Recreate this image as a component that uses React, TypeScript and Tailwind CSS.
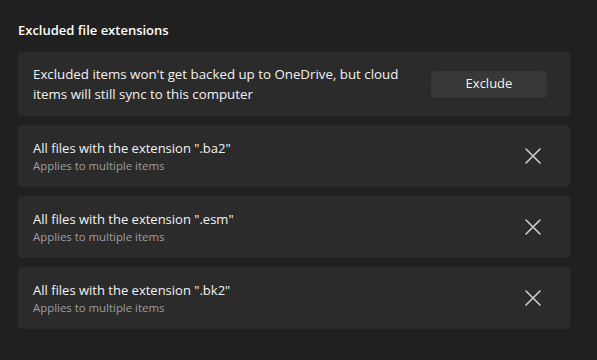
const extensions = ['.ba2', '.esm', '.bk2'];

const CloseIcon = () => (
  <svg width="16" height="16" viewBox="0 0 16 16" className="text-[#cdcdcd]">
    <path d="M1 1 L15 15 M15 1 L1 15" stroke="currentColor" strokeWidth="1.6" strokeLinecap="round" fill="none" />
  </svg>
);

const App = () => {
  return (
    <div className="w-[597px] h-[360px] bg-[#202020] text-white font-['Open_Sans',sans-serif] px-[18px] pt-[20px]">
      <h2 className="text-[13px] font-semibold leading-[20px] mb-[12px]">Excluded file extensions</h2>

      <div className="flex flex-col gap-[9px] w-[552px]">
        {/* Info card */}
        <div className="h-[64px] bg-[#2b2b2b] rounded-[4px] flex items-center justify-between pl-[15px] pr-[23px]">
          <p className="text-[13.3px] leading-[20px] text-[#f2f2f2]">
            Excluded items won't get backed up to OneDrive, but cloud
            <br />
            items will still sync to this computer
          </p>
          <button className="w-[116px] h-[27px] bg-[#373737] rounded-[4px] text-[13px] text-[#f2f2f2]">
            Exclude
          </button>
        </div>

        {extensions.map((ext) => (
          <div
            key={ext}
            className="h-[62px] bg-[#2b2b2b] rounded-[4px] flex items-center justify-between pl-[15px] pr-[29px]"
          >
            <div className="flex flex-col pt-[1px]">
              <span className="text-[13px] leading-[19px] text-[#f2f2f2]">All files with the extension "{ext}"</span>
              <span className="text-[11.4px] leading-[16px] text-[#9e9e9e]">Applies to multiple items</span>
            </div>
            <CloseIcon />
          </div>
        ))}
      </div>
    </div>
  );
};

export default App;
